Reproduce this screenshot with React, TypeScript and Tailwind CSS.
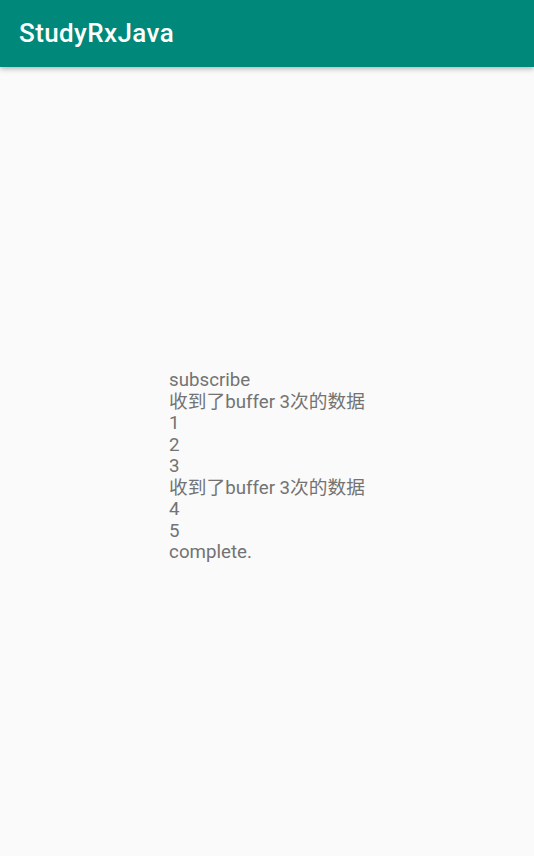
const lines = [
  "subscribe",
  "收到了buffer 3次的数据",
  "1",
  "2",
  "3",
  "收到了buffer 3次的数据",
  "4",
  "5",
  "complete.",
];

export default function App() {
  return (
    <div
      className="flex h-[856px] w-[534px] flex-col overflow-hidden bg-[#fafafa]"
      style={{ fontFamily: 'Roboto, "Noto Sans CJK SC", sans-serif' }}
    >
      {/* Toolbar */}
      <header className="relative z-10 flex h-[67px] shrink-0 items-center bg-[#00897b] px-[19px] shadow-[0_2px_5px_rgba(0,0,0,0.28)]">
        <h1 className="text-[26px] font-medium tracking-[0.4px] text-white">StudyRxJava</h1>
      </header>

      {/* Content */}
      <main className="flex flex-1 items-center justify-center">
        <div className="mt-[11px] text-[18.7px] leading-[21.5px] text-[#737373]">
          {lines.map((l, i) => (
            <div key={i}>{l}</div>
          ))}
        </div>
      </main>
    </div>
  );
}
